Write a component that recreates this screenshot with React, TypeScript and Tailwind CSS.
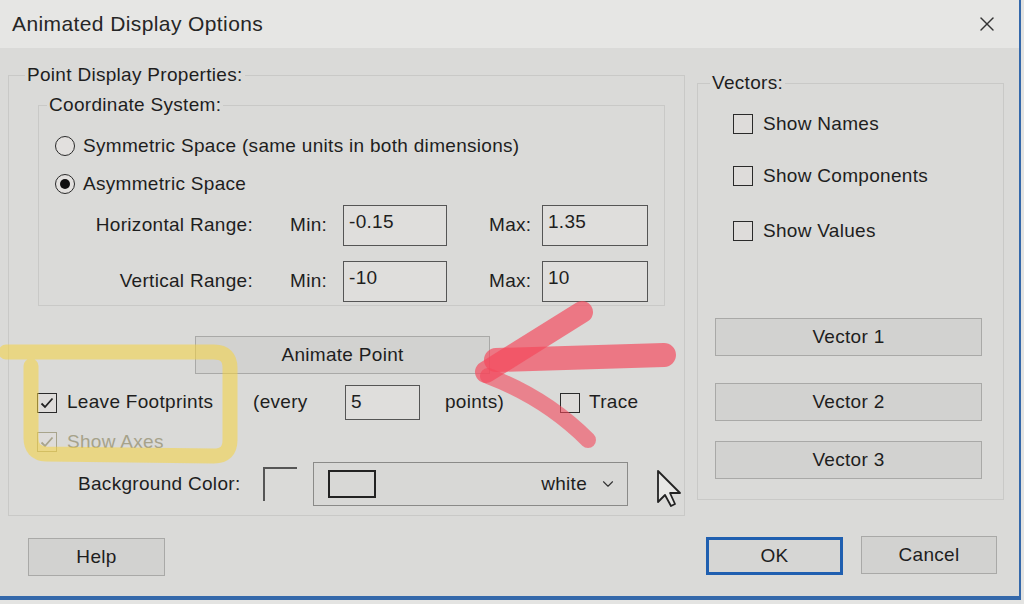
import React from "react";
import { X, ChevronDown } from "lucide-react";

const Check = ({ checked, dim }: { checked?: boolean; dim?: boolean }) => (
  <span
    className={`flex h-[20px] w-[20px] shrink-0 items-center justify-center border-[1.5px] bg-[#dedcda] ${
      dim ? "border-[#a8a48c]" : "border-[#2a2a2a]"
    }`}
  >
    {checked && (
      <svg width="16" height="16" viewBox="0 0 16 16">
        <path
          d="M2.5 8.5 L6 12 L13.5 3.5"
          fill="none"
          stroke={dim ? "#a8a48c" : "#222"}
          strokeWidth="1.8"
        />
      </svg>
    )}
  </span>
);

const Radio = ({ on }: { on?: boolean }) => (
  <span className="flex h-[20px] w-[20px] shrink-0 items-center justify-center rounded-full border-[1.5px] border-[#2a2a2a] bg-[#e2e0de]">
    {on && <span className="h-[10px] w-[10px] rounded-full bg-[#111]" />}
  </span>
);

const Field = ({ value, w }: { value: string; w: string }) => (
  <div
    className={`${w} flex h-full items-start border-[1.5px] border-[#555] bg-[#dfdedc] pl-[5px] pt-[5px] leading-[22px]`}
  >
    {value}
  </div>
);

const Btn = ({ label, w, h = "h-[38px]" }: { label: string; w: string; h?: string }) => (
  <div
    className={`${w} ${h} flex items-center justify-center border border-[#a9a9a7] bg-[#d2d2d0]`}
  >
    {label}
  </div>
);

export default function App() {
  return (
    <div
      className="relative h-[604px] w-[1024px] overflow-hidden bg-[#e4e4e2] text-[19px] tracking-[0.3px] text-[#1e1e1e]"
      style={{ fontFamily: '"Liberation Sans", Arial, sans-serif' }}
    >
      <div className="flex h-[600px] w-[1021px] flex-col border-r-2 border-b-4 border-[#3468aa] bg-[#dadad8]">
        {/* title bar */}
        <div className="flex h-[48px] shrink-0 items-center justify-between bg-[#e6e6e4] pl-[12px] pr-[20px]">
          <span className="text-[21px] tracking-[0.4px] text-[#262626]">Animated Display Options</span>
          <X size={24} strokeWidth={1.4} className="text-[#333]" />
        </div>

        <div className="flex flex-col">
          <div className="flex items-start">
            {/* Point Display Properties */}
            <div className="ml-[8px] mt-[27px] flex h-[441px] w-[677px] flex-col border border-[#c9c9c7]">
              <div className="-mt-[11px] ml-[16px] h-[20px] self-start bg-[#dadad8] px-[2px] leading-[20px]">
                Point Display Properties:
              </div>

              <div className="ml-[29px] mt-[20px] flex h-[201px] w-[627px] flex-col border border-[#c9c9c7]">
                <div className="-mt-[11px] ml-[8px] h-[20px] self-start bg-[#dadad8] px-[2px] leading-[20px]">
                  Coordinate System:
                </div>
                <div className="ml-[16px] mt-[21px] flex h-[20px] items-center gap-[8px]">
                  <Radio />
                  <span>Symmetric Space (same units in both dimensions)</span>
                </div>
                <div className="ml-[16px] mt-[18px] flex h-[20px] items-center gap-[8px]">
                  <Radio on />
                  <span>Asymmetric Space</span>
                </div>
                <div className="mt-[11px] flex h-[41px] items-center">
                  <span className="w-[214px] text-right">Horizontal Range:</span>
                  <span className="ml-[37px] w-[53px]">Min:</span>
                  <Field value="-0.15" w="w-[104px]" />
                  <span className="ml-[42px] w-[53px]">Max:</span>
                  <Field value="1.35" w="w-[106px]" />
                </div>
                <div className="mt-[15px] flex h-[41px] items-center">
                  <span className="w-[214px] text-right">Vertical Range:</span>
                  <span className="ml-[37px] w-[53px]">Min:</span>
                  <Field value="-10" w="w-[104px]" />
                  <span className="ml-[42px] w-[53px]">Max:</span>
                  <Field value="10" w="w-[106px]" />
                </div>
              </div>

              <div className="ml-[186px] mt-[30px]">
                <Btn label="Animate Point" w="w-[295px]" />
              </div>

              <div className="ml-[28px] mt-[11px] flex h-[35px] items-center">
                <div className="flex w-[216px] items-center gap-[10px]">
                  <Check checked />
                  <span>Leave Footprints</span>
                </div>
                <span className="w-[92px]">(every</span>
                <Field value="5" w="w-[75px]" />
                <span className="ml-[25px] w-[115px]">points)</span>
                <Check />
                <span className="ml-[9px]">Trace</span>
              </div>

              <div className="ml-[28px] mt-[12px] flex h-[20px] items-center gap-[10px] text-[#a6a28a]">
                <Check checked dim />
                <span>Show Axes</span>
              </div>

              <div className="ml-[69px] mt-[10px] flex h-[44px] items-center">
                <span className="w-[185px]">Background Color:</span>
                <span className="h-[34px] w-[34px] border-l-2 border-t-2 border-[#555]" />
                <div className="ml-[16px] flex h-[44px] w-[315px] items-center border border-[#8a8a88] bg-[#d8d8d6]">
                  <span className="ml-[14px] h-[28px] w-[48px] border-2 border-[#222]" />
                  <span className="ml-auto">white</span>
                  <ChevronDown size={18} strokeWidth={1.5} className="ml-[12px] mr-[10px] text-[#333]" />
                </div>
              </div>
            </div>

            {/* Vectors */}
            <div className="ml-[12px] mt-[35px] flex h-[417px] w-[307px] flex-col border border-[#c9c9c7]">
              <div className="-mt-[11px] ml-[12px] h-[20px] self-start bg-[#dadad8] px-[2px] leading-[20px]">
                Vectors:
              </div>
              <div className="ml-[35px] mt-[21px] flex h-[20px] items-center gap-[10px]">
                <Check />
                <span>Show Names</span>
              </div>
              <div className="ml-[35px] mt-[32px] flex h-[20px] items-center gap-[10px]">
                <Check />
                <span>Show Components</span>
              </div>
              <div className="ml-[35px] mt-[35px] flex h-[20px] items-center gap-[10px]">
                <Check />
                <span>Show Values</span>
              </div>
              <div className="ml-[17px] mt-[77px]">
                <Btn label="Vector 1" w="w-[267px]" />
              </div>
              <div className="ml-[17px] mt-[27px]">
                <Btn label="Vector 2" w="w-[267px]" />
              </div>
              <div className="ml-[17px] mt-[20px]">
                <Btn label="Vector 3" w="w-[267px]" />
              </div>
            </div>
          </div>

          {/* bottom buttons */}
          <div className="mt-[21px] flex items-start">
            <div className="ml-[28px] mt-px">
              <Btn label="Help" w="w-[137px]" />
            </div>
            <div className="ml-[541px] flex h-[38px] w-[137px] items-center justify-center border-[3px] border-[#1f5fb0] bg-[#d6d6d4]">
              OK
            </div>
            <div className="ml-[18px] -mt-px">
              <Btn label="Cancel" w="w-[136px]" />
            </div>
          </div>
        </div>
      </div>

      {/* mouse pointer */}
      <svg className="pointer-events-none absolute left-[656px] top-[469px]" width="30" height="42" viewBox="0 0 30 42">
        <path
          d="M2 2 L2 33 L9 26 L15 37 L19 35 L14 24 L24 24 Z"
          fill="#e8e8e6"
          stroke="#222"
          strokeWidth="1.8"
          strokeLinejoin="round"
        />
      </svg>

      {/* annotations drawn on the photo */}
      <svg className="pointer-events-none absolute inset-0" width="1024" height="604">
        <path
          d="M6 352 L214 352 Q230 352 230 368 L230 440 Q230 456 214 456 L46 454 Q31 453 31 438 L31 366"
          fill="none"
          stroke="rgba(246,212,64,0.55)"
          strokeWidth="15"
          strokeLinecap="round"
          strokeLinejoin="round"
        />
        <path d="M664 355 L496 360" fill="none" stroke="rgba(244,72,92,0.68)" strokeWidth="24" strokeLinecap="round" />
        <path d="M582 312 L486 372" fill="none" stroke="rgba(244,72,92,0.68)" strokeWidth="22" strokeLinecap="round" />
        <path d="M488 376 Q546 398 588 440" fill="none" stroke="rgba(244,72,92,0.6)" strokeWidth="16" strokeLinecap="round" />
      </svg>
    </div>
  );
}
